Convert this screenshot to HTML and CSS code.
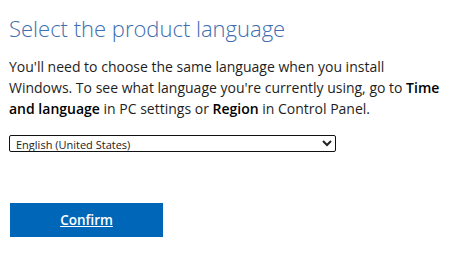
FILE: index.html
```html
<!DOCTYPE html>
<html lang="en">
<head>
    <meta charset="UTF-8">
    <title>Select the product language</title>
    <link rel="stylesheet" href="styles.css">
</head>
<body>
    <div class="lang-section">
        <h1 class="lang-title">Select the product language</h1>
        <p class="lang-text">You'll need to choose the same language when you install Windows. To see what language you're currently using, go to <b>Time and language</b> in PC settings or <b>Region</b> in Control Panel.</p>
        <div class="lang-select">
            <select id="product-languages">
                <option selected>English (United States)</option>
                <option>English (International)</option>
                <option>French</option>
                <option>German</option>
            </select>
        </div>
        <button class="btn-confirm" onclick="return false"><span>Confirm</span></button>
    </div>
</body>
</html>
```

FILE: styles.css
```css
body {
    margin: 0;
    background-color: #fff;
    font-family: "Open Sans", "Noto Sans", sans-serif;
}
.lang-section {
    padding: 12px 10px 0 9px;
}
.lang-title {
    margin: 0;
    font-size: 22px;
    font-weight: 300;
    line-height: 32px;
    color: #3e6db0;
}
.lang-text {
    width: 435px;
    margin: 12px 0 0;
    font-size: 14px;
    line-height: 21px;
    color: #1e1e1e;
}
.lang-text b {
    font-weight: 600;
    color: #000;
}
.lang-select {
    margin-top: 13px;
}
select {
    width: 327px;
    height: 17px;
    padding: 0 2px;
    font-family: inherit;
    font-size: 11px;
    color: #222;
    background-color: #fff;
    border: 1px solid #111;
    border-radius: 2px;
}
.btn-confirm {
    display: block;
    margin: 49px 0 0 1px;
    width: 153px;
    height: 34px;
    border: none;
    background-color: #0067b8;
    color: #fff;
    font-family: inherit;
    font-size: 13.5px;
    font-weight: 600;
    text-decoration: underline;
    cursor: pointer;
}
```
